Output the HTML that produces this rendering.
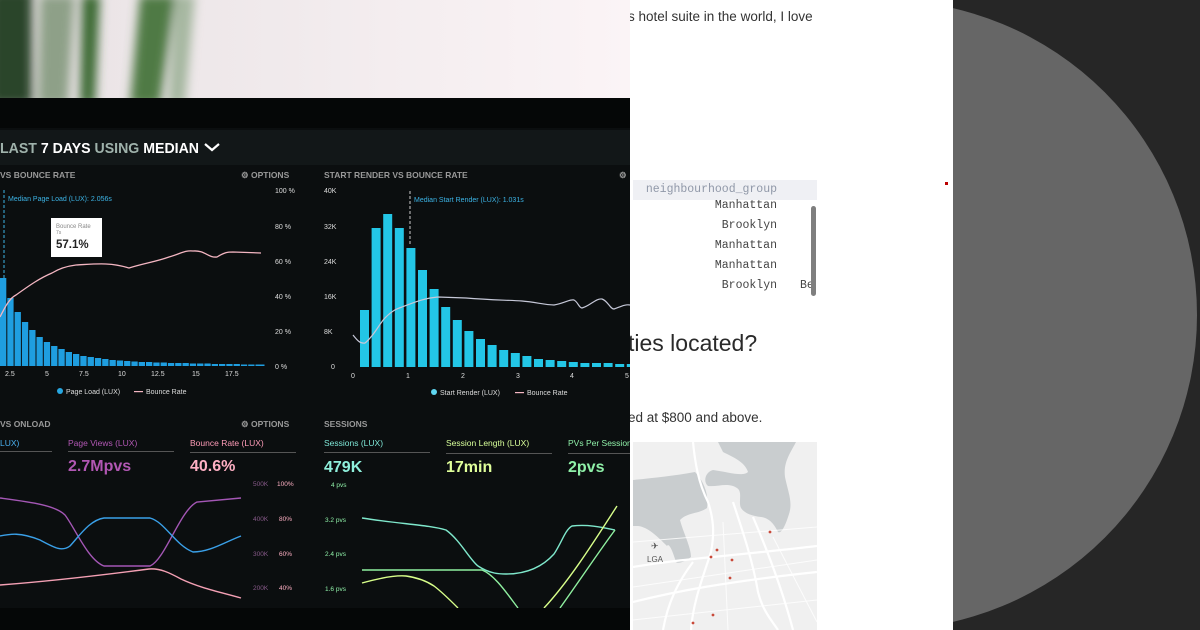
<!DOCTYPE html>
<html><head><meta charset="utf-8"><style>
*{margin:0;padding:0;box-sizing:border-box}
body{width:1200px;height:630px;overflow:hidden;position:relative;background:#262626;font-family:"Liberation Sans",sans-serif}
#photo{position:absolute;left:0;top:0;width:630px;height:630px}
#page{position:absolute;left:630px;top:0;width:323px;height:630px;background:#fff;overflow:hidden}
#dark{position:absolute;left:953px;top:0;width:247px;height:630px;background:#262626;overflow:hidden}
#circ{position:absolute;left:-386px;top:0;width:630px;height:630px;border-radius:50%;background:#666}
.t{position:absolute;color:#333;white-space:nowrap}
.m{position:absolute;font-family:"Liberation Mono",monospace;font-size:11.5px;color:#444;text-align:right}
</style></head><body>
<svg id="photo" viewBox="0 0 630 630" xmlns="http://www.w3.org/2000/svg">
<defs>
<linearGradient id="bg" x1="0" x2="1"><stop offset="0" stop-color="#e8e2e4"/><stop offset="1" stop-color="#fbf4f6"/></linearGradient>
<filter id="bl"><feGaussianBlur stdDeviation="5"/></filter>
</defs>
<rect width="630" height="100" fill="url(#bg)"/>
<g filter="url(#bl)">
<rect x="-10" y="-10" width="42" height="115" fill="#2c4429"/>
<path d="M40 -5 L75 -5 L68 105 L38 105Z" fill="#8ea088"/>
<path d="M82 -5 L100 -5 L95 105 L80 105Z" fill="#3d6a36"/>
<path d="M140 -5 L175 -5 L160 105 L130 105Z" fill="#4f7a45"/>
<path d="M175 -5 L195 -5 L185 105 L168 105Z" fill="#a6b7a0"/>
</g>
<rect y="98" width="630" height="532" fill="#050707"/>
<rect y="128" width="630" height="480" fill="#0b0e0f"/>
<rect y="130" width="630" height="35" fill="#121718"/>
<text x="0" y="153" font-size="15" font-weight="bold" fill="#9fb2ab" textLength="199" lengthAdjust="spacingAndGlyphs">LAST <tspan fill="#fff">7 DAYS</tspan> USING <tspan fill="#fff">MEDIAN</tspan></text>
<path d="M205 144 l7 6 l7 -6" stroke="#fff" stroke-width="2.2" fill="none"/>
<g font-size="8.5" font-weight="bold" fill="#999">
<text x="0" y="178">VS BOUNCE RATE</text><text x="241" y="178">⚙ OPTIONS</text>
<text x="324" y="178">START RENDER VS BOUNCE RATE</text><text x="619" y="178">⚙</text>
<text x="0" y="427">VS ONLOAD</text><text x="241" y="427">⚙ OPTIONS</text>
<text x="324" y="427">SESSIONS</text>
</g>
<g font-size="7" fill="#ddd">
<text x="275" y="193">100 %</text><text x="275" y="229">80 %</text><text x="275" y="264">60 %</text><text x="275" y="299">40 %</text><text x="275" y="334">20 %</text><text x="275" y="369">0 %</text>
<text x="5" y="376">2.5</text><text x="45" y="376">5</text><text x="79" y="376">7.5</text><text x="118" y="376">10</text><text x="151" y="376">12.5</text><text x="192" y="376">15</text><text x="225" y="376">17.5</text>
<text x="324" y="193">40K</text><text x="324" y="229">32K</text><text x="324" y="264">24K</text><text x="324" y="299">16K</text><text x="324" y="334">8K</text><text x="331" y="369">0</text>
<text x="351" y="378">0</text><text x="406" y="378">1</text><text x="461" y="378">2</text><text x="516" y="378">3</text><text x="570" y="378">4</text><text x="625" y="378">5</text>
<text x="66" y="394">Page Load (LUX)</text><text x="146" y="394">Bounce Rate</text>
<text x="440" y="395">Start Render (LUX)</text><text x="527" y="395">Bounce Rate</text>
</g>
<circle cx="60" cy="391" r="3" fill="#27a6e0"/><rect x="134" y="391" width="9" height="1.2" fill="#f4b6c2"/>
<circle cx="434" cy="392" r="3" fill="#5fd6f0"/><rect x="515" y="392" width="9" height="1.2" fill="#f4b6c2"/>
<g font-size="7" fill="#3cb4e6"><text x="8" y="201">Median Page Load (LUX): 2.056s</text><text x="414" y="202">Median Start Render (LUX): 1.031s</text></g>
<path d="M4 190V366" stroke="#3cb4e6" stroke-dasharray="3 2"/>
<path d="M410 191V245" stroke="#ccc" stroke-dasharray="3 2"/>
<g fill="#1f9ee0">
<rect x="0" y="278" width="6.3" height="88"/><rect x="7.3" y="298" width="6.3" height="68"/><rect x="14.6" y="312" width="6.3" height="54"/><rect x="21.9" y="322" width="6.3" height="44"/><rect x="29.2" y="330" width="6.3" height="36"/><rect x="36.5" y="337" width="6.3" height="29"/><rect x="43.8" y="342" width="6.3" height="24"/><rect x="51.1" y="346" width="6.3" height="20"/><rect x="58.4" y="349" width="6.3" height="17"/><rect x="65.7" y="352" width="6.3" height="14"/><rect x="73" y="354" width="6.3" height="12"/><rect x="80.3" y="356" width="6.3" height="10"/><rect x="87.6" y="357" width="6.3" height="9"/><rect x="94.9" y="358" width="6.3" height="8"/><rect x="102.2" y="359" width="6.3" height="7"/><rect x="109.5" y="360" width="6.3" height="6"/><rect x="116.8" y="360.5" width="6.3" height="5.5"/><rect x="124.1" y="361" width="6.3" height="5"/><rect x="131.4" y="361.5" width="6.3" height="4.5"/><rect x="138.7" y="362" width="6.3" height="4"/><rect x="146" y="362" width="6.3" height="4"/><rect x="153.3" y="362.5" width="6.3" height="3.5"/><rect x="160.6" y="362.5" width="6.3" height="3.5"/><rect x="167.9" y="363" width="6.3" height="3"/><rect x="175.2" y="363" width="6.3" height="3"/><rect x="182.5" y="363" width="6.3" height="3"/><rect x="189.8" y="363.5" width="6.3" height="2.5"/><rect x="197.1" y="363.5" width="6.3" height="2.5"/><rect x="204.4" y="363.5" width="6.3" height="2.5"/><rect x="211.7" y="364" width="6.3" height="2"/><rect x="219" y="364" width="6.3" height="2"/><rect x="226.3" y="364" width="6.3" height="2"/><rect x="233.6" y="364" width="6.3" height="2"/><rect x="240.9" y="364.5" width="6.3" height="1.5"/><rect x="248.2" y="364.5" width="6.3" height="1.5"/><rect x="255.5" y="364.5" width="9" height="1.5"/>
</g>
<path d="M0 317 C6 305 10 298 16 295 C30 285 40 278 52 273 C60 268 68 266 76 265 C95 264 110 262 129 268 C145 263 155 262 169 257 C180 254 185 250 193 251 C205 250 208 258 217 257 C225 252 228 252 233 252 L261 253" stroke="#f4b6c2" stroke-width="1.3" fill="none"/>
<rect x="51" y="218" width="51" height="39" fill="#fff"/>
<text x="56" y="228" font-size="6" fill="#888">Bounce Rate</text>
<text x="56" y="234" font-size="5" fill="#888">7s</text>
<text x="56" y="248" font-size="11.5" font-weight="bold" fill="#222">57.1%</text>
<g fill="#23c6e6">
<rect x="360" y="310" width="9" height="57"/><rect x="371.6" y="228" width="9" height="139"/><rect x="383.2" y="214" width="9" height="153"/><rect x="394.8" y="228" width="9" height="139"/><rect x="406.4" y="248" width="9" height="119"/><rect x="418" y="270" width="9" height="97"/><rect x="429.6" y="289" width="9" height="78"/><rect x="441.2" y="307" width="9" height="60"/><rect x="452.8" y="320" width="9" height="47"/><rect x="464.4" y="331" width="9" height="36"/><rect x="476" y="339" width="9" height="28"/><rect x="487.6" y="345" width="9" height="22"/><rect x="499.2" y="350" width="9" height="17"/><rect x="510.8" y="353" width="9" height="14"/><rect x="522.4" y="356" width="9" height="11"/><rect x="534" y="359" width="9" height="8"/><rect x="545.6" y="360" width="9" height="7"/><rect x="557.2" y="361" width="9" height="6"/><rect x="568.8" y="362" width="9" height="5"/><rect x="580.4" y="363" width="9" height="4"/><rect x="592" y="363" width="9" height="4"/><rect x="603.6" y="363" width="9" height="4"/><rect x="615.2" y="364" width="9" height="3"/><rect x="626.8" y="364" width="4" height="3"/>
</g>
<path d="M353 335 C357 340 360 344 365 343 C375 335 380 322 386 317 C392 311 396 309 402 307 C415 302 425 298 438 297 L466 298 C490 300 505 300 522 301 C535 302 545 305 554 305 C565 303 570 299 574 300 C578 302 579 308 582 308 C590 306 596 298 602 299 C608 301 610 309 614 309 C620 307 625 304 630 305" stroke="#c6c8d8" stroke-width="1.2" fill="none"/>
<g font-size="8.5" fill="#ccc">
<text x="0" y="446" fill="#4ab0f0">LUX)</text><text x="68" y="446" fill="#b157b3">Page Views (LUX)</text><text x="190" y="446" fill="#ff9cb8">Bounce Rate (LUX)</text>
<text x="324" y="446" fill="#7fe8d8">Sessions (LUX)</text><text x="446" y="446" fill="#d8ff9a">Session Length (LUX)</text><text x="568" y="446" fill="#8ff0a8">PVs Per Session</text>
</g>
<g fill="#555"><rect x="0" y="451" width="52" height="1"/><rect x="68" y="451" width="106" height="1"/><rect x="190" y="452" width="106" height="1"/><rect x="324" y="452" width="106" height="1"/><rect x="446" y="453" width="106" height="1"/><rect x="568" y="453" width="62" height="1"/></g>
<g font-size="16" font-weight="bold">
<text x="68" y="471" fill="#b157b3">2.7Mpvs</text><text x="190" y="471" fill="#ffb0c4">40.6%</text>
<text x="324" y="472" fill="#8ff0dc">479K</text><text x="446" y="472" fill="#e0ff9a">17min</text><text x="568" y="472" fill="#8ff0a8">2pvs</text>
</g>
<g font-size="6.5">
<text x="253" y="486" fill="#885a8a">500K</text><text x="277" y="486" fill="#ffb0c4">100%</text>
<text x="253" y="521" fill="#885a8a">400K</text><text x="279" y="521" fill="#ffb0c4">80%</text>
<text x="253" y="556" fill="#885a8a">300K</text><text x="279" y="556" fill="#ffb0c4">60%</text>
<text x="253" y="590" fill="#885a8a">200K</text><text x="279" y="590" fill="#ffb0c4">40%</text>
<text x="331" y="487" fill="#8ff0a8">4 pvs</text><text x="325" y="522" fill="#8ff0a8">3.2 pvs</text><text x="325" y="556" fill="#8ff0a8">2.4 pvs</text><text x="325" y="591" fill="#8ff0a8">1.6 pvs</text>
</g>
<g fill="none" stroke-width="1.4">
<path d="M0 498 C30 502 55 505 65 515 C75 528 88 560 104 566 L150 566 C165 560 180 510 197 502 L241 498" stroke="#a457b5"/>
<path d="M0 536 C10 534 20 532 40 540 C55 548 62 552 70 546 C80 535 90 520 104 518 L150 518 C165 522 175 545 193 552 C210 552 225 542 241 536" stroke="#3aa0e8"/>
<path d="M0 585 C40 582 80 578 149 569 C160 568 170 573 181 579 C200 588 220 592 241 598" stroke="#f4a0b4"/>
<path d="M362 518 C400 524 430 525 446 530 C460 540 470 560 478 566 C490 574 500 574 506 574 C530 574 545 564 554 554 C562 542 565 530 572 526 C590 524 605 528 615 530" stroke="#7fe8cc"/>
<path d="M362 570 L482 570 C495 575 508 595 518 608" stroke="#8ff0a0"/>
<path d="M362 583 C380 578 395 575 406 576 C420 578 428 582 434 586 C442 592 450 600 458 608" stroke="#d8ff8a"/>
<path d="M544 608 C570 580 595 540 617 506" stroke="#d8ff8a"/>
<path d="M560 608 C580 580 600 550 615 530" stroke="#8ff0a0"/>
</g>
<rect y="608" width="630" height="22" fill="#050707"/>
</svg>
<div id="page">
<div class="t" style="left:-2px;top:9px;font-size:13.5px;color:#333">s hotel suite in the world, I love</div>
<div style="position:absolute;left:3px;top:180px;width:184px;height:20px;background:#eff0f4"></div>
<div class="m" style="top:183px;right:176px;color:#9098a8">neighbourhood_group</div>
<div class="m" style="top:199px;right:176px">Manhattan</div>
<div class="m" style="top:219px;right:176px">Brooklyn</div>
<div class="m" style="top:239px;right:176px">Manhattan</div>
<div class="m" style="top:259px;right:176px">Manhattan</div>
<div class="m" style="top:279px;right:176px">Brooklyn</div>
<div class="m" style="top:279px;left:170px">Be</div>
<div style="position:absolute;left:181px;top:206px;width:5px;height:90px;border-radius:3px;background:#7f7f7f"></div>
<div class="t" style="left:-2px;top:330px;font-size:23px;color:#2a2a2a">ties located?</div>
<div class="t" style="left:-2px;top:410px;font-size:13.5px">ed at $800 and above.</div>
<svg style="position:absolute;left:3px;top:442px" width="184" height="188" viewBox="0 0 184 188">
<rect width="184" height="188" fill="#f0f0f0"/>
<path d="M85 0 H163 C158 10 150 20 152 35 C155 50 160 60 156 72 C152 85 148 92 145 90 C140 80 135 76 128 75 C120 74 112 72 108 66 C105 60 110 50 104 46 C95 40 85 45 75 44 C70 40 72 30 80 28 C95 30 110 35 115 30 C112 20 100 15 90 10Z" fill="#c9cdcf"/>
<path d="M0 38 C20 36 40 34 62 30 C72 40 76 55 74 66 C66 72 55 70 47 78 C50 90 58 105 58 115 C52 120 45 122 43 120 C40 110 36 100 34 104 C25 95 15 85 5 84 L0 84Z" fill="#c9cdcf"/>
<g stroke="#fff" stroke-width="2.2" fill="none">
<path d="M60 0 C62 20 65 40 75 60 C80 75 82 90 78 110 C70 135 60 160 58 188"/>
<path d="M0 125 C30 120 50 118 80 115 C110 112 150 108 184 104"/>
<path d="M0 160 C40 150 90 140 184 130"/>
<path d="M100 60 C110 90 120 120 125 150 C130 170 140 180 145 188"/>
<path d="M120 75 C135 110 150 150 160 188"/>
<path d="M30 188 C35 160 45 140 60 120"/>
</g>
<g stroke="#fff" stroke-width="1" fill="none" opacity=".8">
<path d="M0 100 L184 85"/><path d="M0 145 L184 118"/><path d="M0 178 L184 158"/><path d="M90 80 L95 188"/><path d="M140 95 L184 180"/>
</g>
<g fill="#c94a3a"><circle cx="137" cy="90" r="1.4"/><circle cx="84" cy="108" r="1.4"/><circle cx="78" cy="115" r="1.4"/><circle cx="99" cy="118" r="1.4"/><circle cx="97" cy="136" r="1.4"/><circle cx="80" cy="173" r="1.4"/><circle cx="60" cy="181" r="1.4"/></g>
<text x="14" y="120" font-size="8" fill="#555" font-family="Liberation Sans">LGA</text>
<text x="18" y="107" font-size="9" fill="#555">✈</text>
</svg>
</div>
<div style="position:absolute;left:945px;top:182px;width:3px;height:3px;background:#b00"></div>
<div id="dark"><div id="circ"></div></div>
</body></html>
